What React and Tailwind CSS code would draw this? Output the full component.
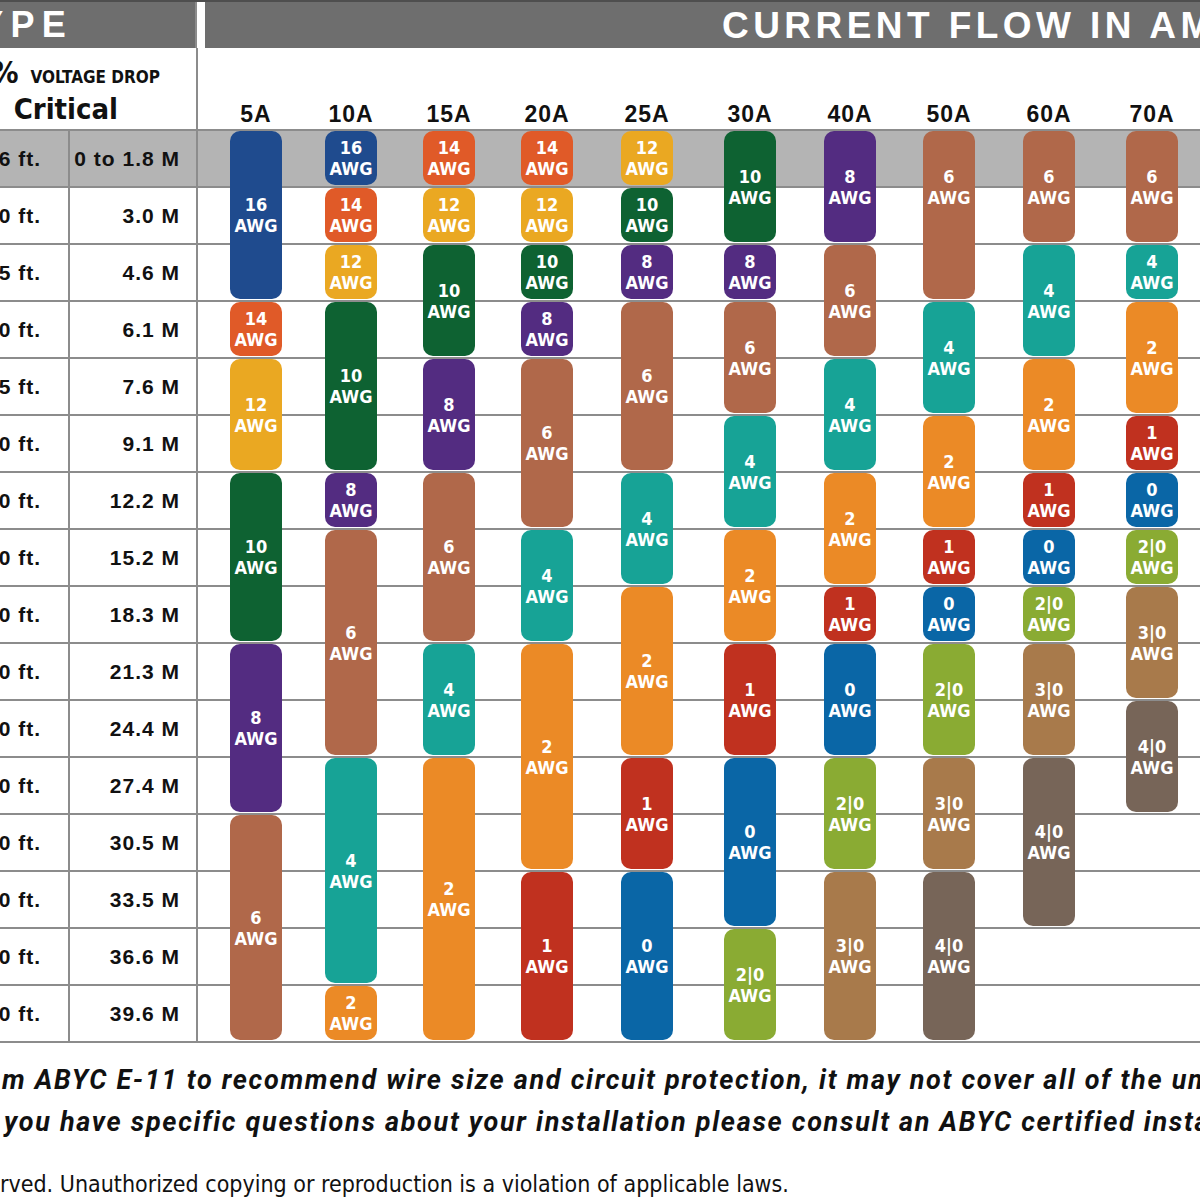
import React from 'react';

const SANS = "font-['Liberation_Sans',Arial,sans-serif]";
const NARROW = "font-['Liberation_Sans_Narrow','DejaVu_Sans_Condensed',sans-serif]";

const COLORS = {
    '16': 'bg-[#1f4b8e]',
    '14': 'bg-[#e05a28]',
    '12': 'bg-[#eaa822]',
    '10': 'bg-[#0e6232]',
    '8': 'bg-[#532c81]',
    '6': 'bg-[#b0684a]',
    '4': 'bg-[#17a396]',
    '2': 'bg-[#eb8a26]',
    '1': 'bg-[#c0311f]',
    '0': 'bg-[#0a66a6]',
    '2|0': 'bg-[#8aab33]',
    '3|0': 'bg-[#a87a4b]',
    '4|0': 'bg-[#776558]',
};

const HEIGHTS = { 1: 'h-[54px]', 2: 'h-[111px]', 3: 'h-[168px]', 4: 'h-[225px]', 5: 'h-[282px]' };

const ROWS = [
    ['0 to 6 ft.', '0 to 1.8 M'],
    ['10 ft.', '3.0 M'],
    ['15 ft.', '4.6 M'],
    ['20 ft.', '6.1 M'],
    ['25 ft.', '7.6 M'],
    ['30 ft.', '9.1 M'],
    ['40 ft.', '12.2 M'],
    ['50 ft.', '15.2 M'],
    ['60 ft.', '18.3 M'],
    ['70 ft.', '21.3 M'],
    ['80 ft.', '24.4 M'],
    ['90 ft.', '27.4 M'],
    ['100 ft.', '30.5 M'],
    ['110 ft.', '33.5 M'],
    ['120 ft.', '36.6 M'],
    ['130 ft.', '39.6 M'],
];

// each column: amps, left margin, pills [gauge, rows spanned, label at top?]
const COLUMNS = [
    { amps: '5A', ml: 'ml-[32px]', pills: [['16', 3], ['14', 1], ['12', 2], ['10', 3], ['8', 3], ['6', 4]] },
    { amps: '10A', ml: 'ml-[43px]', pills: [['16', 1], ['14', 1], ['12', 1], ['10', 3], ['8', 1], ['6', 4], ['4', 4], ['2', 1]] },
    { amps: '15A', ml: 'ml-[46px]', pills: [['14', 1], ['12', 1], ['10', 2], ['8', 2], ['6', 3], ['4', 2], ['2', 5]] },
    { amps: '20A', ml: 'ml-[46px]', pills: [['14', 1], ['12', 1], ['10', 1], ['8', 1], ['6', 3], ['4', 2], ['2', 4], ['1', 3]] },
    { amps: '25A', ml: 'ml-[48px]', pills: [['12', 1], ['10', 1], ['8', 1], ['6', 3], ['4', 2], ['2', 3], ['1', 2], ['0', 3]] },
    { amps: '30A', ml: 'ml-[51px]', pills: [['10', 2], ['8', 1], ['6', 2], ['4', 2], ['2', 2], ['1', 2], ['0', 3], ['2|0', 2]] },
    { amps: '40A', ml: 'ml-[48px]', pills: [['8', 2], ['6', 2], ['4', 2], ['2', 2], ['1', 1], ['0', 2], ['2|0', 2], ['3|0', 3]] },
    { amps: '50A', ml: 'ml-[47px]', pills: [['6', 3, true], ['4', 2], ['2', 2], ['1', 1], ['0', 1], ['2|0', 2], ['3|0', 2], ['4|0', 3]] },
    { amps: '60A', ml: 'ml-[48px]', pills: [['6', 2], ['4', 2], ['2', 2], ['1', 1], ['0', 1], ['2|0', 1], ['3|0', 2], ['4|0', 3]] },
    { amps: '70A', ml: 'ml-[51px]', pills: [['6', 2], ['4', 1], ['2', 2], ['1', 1], ['0', 1], ['2|0', 1], ['3|0', 2], ['4|0', 2]] },
];

const Pill = ({ gauge, span, top }) => (
    <div
        className={`w-[52px] shrink-0 rounded-[10px] flex flex-col items-center text-white font-bold text-[18px] leading-[21px] ${NARROW} ${COLORS[gauge]} ${HEIGHTS[span]} ${top ? 'justify-start pt-[35px]' : 'justify-center'}`}
    >
        <span>{gauge}</span>
        <span>AWG</span>
    </div>
);

const App = () => {
    return (
        <div className={`w-[1200px] h-[1200px] bg-white overflow-hidden text-[#111] ${SANS}`}>
            {/* title band */}
            <div className="h-[2px] bg-[#4e4e4e]"></div>
            <div className="flex h-[46px]">
                <div className="w-[195px] bg-[#6e6e6e] flex items-center justify-end pr-[122px] overflow-hidden">
                    <span className="whitespace-nowrap text-white font-bold text-[36px] tracking-[0.2em] leading-none">WIRE TYPE</span>
                </div>
                <div className="w-[2px] bg-[#8c8c8c]"></div>
                <div className="w-[8px] bg-white"></div>
                <div className="flex-1 bg-[#6e6e6e] flex items-center pl-[517px] overflow-hidden">
                    <span className="whitespace-nowrap text-white font-bold text-[37px] tracking-[0.12em] leading-none">CURRENT FLOW IN AMPS</span>
                </div>
            </div>

            {/* column headings */}
            <div className="flex h-[81px]">
                <div className="w-[198px] border-r-2 border-[#8c8c8c] flex flex-col items-end overflow-hidden">
                    <div className="flex items-baseline justify-end pr-[36px] pt-[10px] whitespace-nowrap">
                        <span className={`text-[30px] font-bold leading-none ${NARROW}`}>3%</span>
                        <span className={`ml-[12px] text-[17px] font-bold leading-none ${NARROW}`}>VOLTAGE DROP</span>
                    </div>
                    <div className={`pr-[78px] pt-[4px] text-[29px] font-bold leading-[34px] whitespace-nowrap ${NARROW}`}>Critical</div>
                </div>
                <div className="flex-1 flex items-end pb-[3px]">
                    {COLUMNS.map((col) => (
                        <div key={col.amps} className={`w-[52px] shrink-0 flex justify-center ${col.ml}`}>
                            <span className="whitespace-nowrap text-[23px] font-bold tracking-[1px] leading-none">{col.amps}</span>
                        </div>
                    ))}
                </div>
            </div>

            {/* chart body */}
            <div className="flex border-t-2 border-[#8c8c8c]">
                <div className="w-[198px] shrink-0 flex flex-col border-r-2 border-[#8c8c8c]">
                    {ROWS.map(([ft, m], i) => (
                        <div key={ft} className={`flex h-[57px] border-b-2 border-[#8c8c8c] ${i === 0 ? 'bg-[#b4b4b4]' : ''}`}>
                            <div className="w-[70px] shrink-0 border-r-2 border-[#8c8c8c] flex items-center justify-end pr-[27px] overflow-hidden">
                                <span className="whitespace-nowrap text-[21px] font-bold tracking-[1px]">{ft}</span>
                            </div>
                            <div className="flex-1 flex items-center justify-end pr-[16px]">
                                <span className="whitespace-nowrap text-[21px] font-bold tracking-[1px]">{m}</span>
                            </div>
                        </div>
                    ))}
                </div>
                <div className="flex-1 grid">
                    <div className="[grid-area:1/1] flex flex-col">
                        {ROWS.map(([ft], i) => (
                            <div key={ft} className={`h-[57px] border-b-2 border-[#8c8c8c] ${i === 0 ? 'bg-[#b4b4b4]' : ''}`}></div>
                        ))}
                    </div>
                    <div className="[grid-area:1/1] flex items-start">
                        {COLUMNS.map((col) => (
                            <div key={col.amps} className={`flex flex-col gap-[3px] ${col.ml}`}>
                                {col.pills.map(([g, span, top], j) => (
                                    <Pill key={j} gauge={g} span={span} top={top} />
                                ))}
                            </div>
                        ))}
                    </div>
                </div>
            </div>

            {/* notes */}
            <div className="pt-[16px] whitespace-nowrap overflow-hidden">
                <p className="font-['Roboto',sans-serif] text-[27px] italic font-bold leading-[42px] tracking-[1.7px] pl-[2px]">
                    m ABYC E-11 to recommend wire size and circuit protection, it may not cover all of the unique
                </p>
                <p className="font-['Roboto',sans-serif] text-[27px] italic font-bold leading-[42px] tracking-[1.7px] pl-[4px]">
                    you have specific questions about your installation please consult an ABYC certified installer.
                </p>
                <p className={`mt-[26px] text-[23px] leading-[30px] ${NARROW}`}>
                    rved. Unauthorized copying or reproduction is a violation of applicable laws.
                </p>
            </div>
        </div>
    );
};

export default App;
